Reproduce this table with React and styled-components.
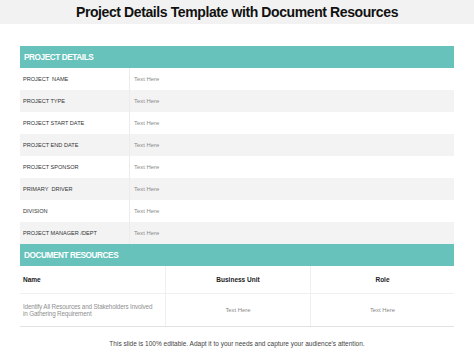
import React from 'react';
import styled, {createGlobalStyle} from "styled-components";

const GlobalStyle = createGlobalStyle`
    body{
        margin:0;
        background:#fff;
        font-family: "Liberation Sans", Arial, sans-serif;
    }
`;

const Page = styled.div`
    width:474px;
    height:355px;
    background:#fff;
    overflow:hidden;
`;

const TitleBar = styled.div`
    height:24px;
    background:#f2f2f2;
    display:flex;
    align-items:center;
    justify-content:center;
    font-size:14px;
    font-weight:700;
    color:#111;
    letter-spacing:-0.4px;
`;

const Content = styled.div`
    margin-top:22px;
    padding:0 20px;
`;

const SectionHeader = styled.div`
    height:22px;
    background:#67c2bc;
    color:#fff;
    font-weight:700;
    font-size:8.2px;
    letter-spacing:-0.4px;
    display:flex;
    align-items:center;
    padding-left:4px;
`;

const DetailRow = styled.div`
    display:grid;
    grid-template-columns:109px 1fr;
    height:22px;
    background:${p => p.shade ? '#f3f3f3' : '#fff'};
`;

const Label = styled.div`
    display:flex;
    align-items:center;
    padding-left:3px;
    font-size:5.6px;
    color:#333;
    white-space:pre;
`;

const Value = styled.div`
    display:flex;
    align-items:center;
    padding-left:4px;
    border-left:1px solid #ececec;
    font-size:5.9px;
    color:#8a8a8a;
`;

const DocRow = styled.div`
    display:grid;
    grid-template-columns:145px 145px 1fr;
    height:${p => p.h}px;
    border-bottom:1px solid ${p => p.last ? '#e2e2e2' : '#f0f0f0'};
`;

const DocCell = styled.div`
    display:flex;
    align-items:center;
    justify-content:${p => p.left ? 'flex-start' : 'center'};
    padding-left:${p => p.left ? '3px' : '0'};
    border-left:${p => p.left ? 'none' : '1px solid #efefef'};
    font-size:${p => p.head ? '6.5px' : '5.9px'};
    font-weight:${p => p.head ? 700 : 400};
    color:${p => p.head ? '#222' : '#8a8a8a'};
    line-height:7px;
`;

const Wrapped = styled.span`
    letter-spacing:-0.15px;
    font-size:6.3px;
    color:#8f8f8f;
`;

const Footer = styled.div`
    margin-top:13px;
    text-align:center;
    font-size:6.5px;
    color:#444;
`;

const details = [
    ['PROJECT  NAME', 'Text Here'],
    ['PROJECT TYPE', 'Text Here'],
    ['PROJECT START DATE', 'Text Here'],
    ['PROJECT END DATE', 'Text Here'],
    ['PROJECT SPONSOR', 'Text Here'],
    ['PRIMARY  DRIVER', 'Text Here'],
    ['DIVISION', 'Text Here'],
    ['PROJECT MANAGER /DEPT', 'Text Here'],
];

export default function App() {
    return (
        <Page>
            <GlobalStyle/>
            <TitleBar>Project Details Template with Document Resources</TitleBar>
            <Content>
                <SectionHeader>PROJECT DETAILS</SectionHeader>
                {details.map(([label, value], i) =>
                    <DetailRow key={label} shade={i % 2 === 1}>
                        <Label>{label}</Label>
                        <Value>{value}</Value>
                    </DetailRow>
                )}
                <SectionHeader>DOCUMENT RESOURCES</SectionHeader>
                <DocRow h={27}>
                    <DocCell left head>Name</DocCell>
                    <DocCell head>Business Unit</DocCell>
                    <DocCell head>Role</DocCell>
                </DocRow>
                <DocRow h={32} last>
                    <DocCell left>
                        <Wrapped>Identify All Resources and Stakeholders Involved<br/>in Gathering Requirement</Wrapped>
                    </DocCell>
                    <DocCell>Text Here</DocCell>
                    <DocCell>Text Here</DocCell>
                </DocRow>
            </Content>
            <Footer>This slide is 100% editable. Adapt it to your needs and capture your audience's attention.</Footer>
        </Page>
    );
}
